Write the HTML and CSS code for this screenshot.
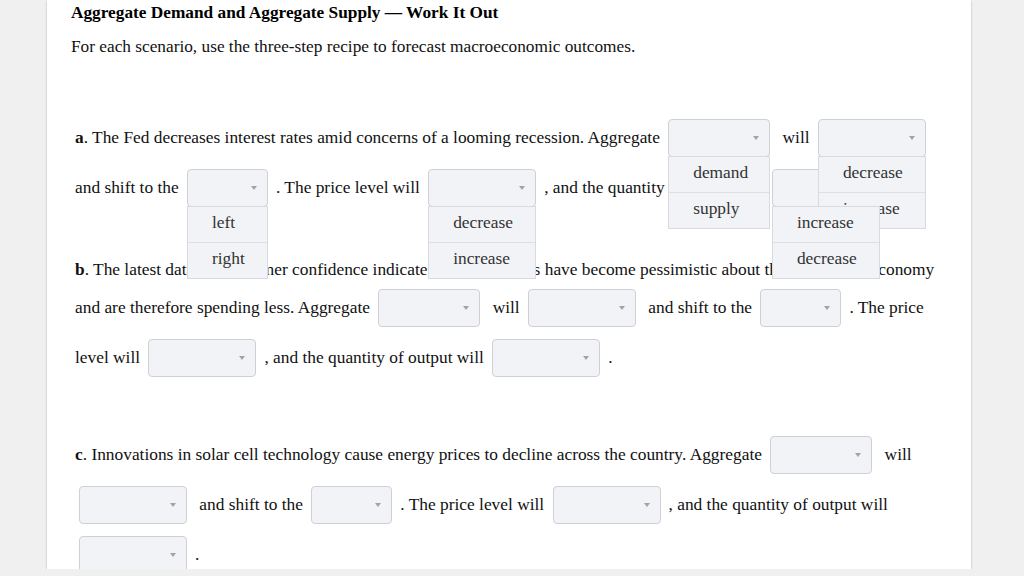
FILE: index.html
```html
<!DOCTYPE html>
<html lang="en">
<head>
<meta charset="utf-8">
<title>Aggregate Demand and Aggregate Supply — Work It Out</title>
<link rel="stylesheet" href="styles.css">
</head>
<body>
<main class="card">
  <h1 class="title">Aggregate Demand and Aggregate Supply — Work It Out</h1>
  <p class="intro">For each scenario, use the three-step recipe to forecast macroeconomic outcomes.</p>

  <p class="question question-a"><b>a</b>. The Fed decreases interest rates amid concerns of a looming recession. Aggregate <span class="dd dd-ad"><span class="dd-menu"><span class="dd-opt">demand</span><span class="dd-opt">supply</span></span></span> will <span class="dd dd-change"><span class="dd-menu"><span class="dd-opt">decrease</span><span class="dd-opt">increase</span></span></span> and shift to the <span class="dd dd-dir"><span class="dd-menu"><span class="dd-opt">left</span><span class="dd-opt">right</span></span></span>. The price level will <span class="dd dd-change"><span class="dd-menu"><span class="dd-opt">decrease</span><span class="dd-opt">increase</span></span></span>, and the quantity of output will <span class="dd dd-change"><span class="dd-menu"><span class="dd-opt">increase</span><span class="dd-opt">decrease</span></span></span>.</p>

  <p class="question question-b"><b>b</b>. The latest data on consumer confidence indicate that households have become pessimistic about the state of the economy and are therefore spending less. Aggregate <span class="dd dd-ad"></span> will <span class="dd dd-change"></span> and shift to the <span class="dd dd-dir"></span>. The price level will <span class="dd dd-change"></span>, and the quantity of output will <span class="dd dd-change"></span>.</p>

  <p class="question question-c"><b>c</b>. Innovations in solar cell technology cause energy prices to decline across the country. Aggregate <span class="dd dd-ad"></span> will <span class="dd dd-change"></span> and shift to the <span class="dd dd-dir"></span>. The price level will <span class="dd dd-change"></span>, and the quantity of output will <span class="dd dd-change"></span>.</p>
</main>
</body>
</html>
```

FILE: styles.css
```css
html, body {
  margin: 0;
  padding: 0;
}

body {
  background: #f0f0f0;
  font-family: "Liberation Serif", "Times New Roman", serif;
  font-size: 17.3px;
  color: #111;
}

.card {
  margin-left: 47px;
  width: 924px;
  height: 569px;
  box-sizing: border-box;
  padding: 0 24px;
  background: #fff;
  overflow: hidden;
  box-shadow: 0 1px 2px rgba(0, 0, 0, 0.28);
}

.title {
  margin: 0;
  font-size: 17.3px;
  line-height: 26px;
  font-weight: bold;
  color: #000;
}

.intro {
  margin: 7px 0 0;
  line-height: 28px;
}

.question {
  margin: 0;
  padding: 0 4px;
  font-size: 17.36px;
  line-height: 28px;
}

.question-a { margin-top: 53px; }
.question-b { margin-top: 42px; }
.question-c { margin-top: 47px; }

.dd {
  position: relative;
  display: inline-block;
  vertical-align: middle;
  height: 38px;
  box-sizing: border-box;
  margin: 5px 8px 7px 4px;
  border: 1px solid #cfd0d5;
  border-radius: 4px;
  background: #f2f3f7;
}

.dd::after {
  content: "";
  position: absolute;
  right: 10px;
  top: 16px;
  border-left: 3.5px solid transparent;
  border-right: 3.5px solid transparent;
  border-top: 4px solid #a3a3a6;
}

.dd-ad { width: 102px; }
.dd-change { width: 108px; }
.dd-dir { width: 81px; }

.dd-menu {
  position: absolute;
  top: 100%;
  left: -1px;
  right: -1px;
  z-index: 1;
  display: flex;
  flex-direction: column;
  background: #f2f3f7;
  border: 1px solid #d9dadf;
}

.dd-opt {
  height: 29px;
  padding: 6px 0 0 24px;
  line-height: 20px;
  color: #333;
  white-space: nowrap;
}

.dd-opt + .dd-opt {
  border-top: 1px solid #dedfe3;
}
```
